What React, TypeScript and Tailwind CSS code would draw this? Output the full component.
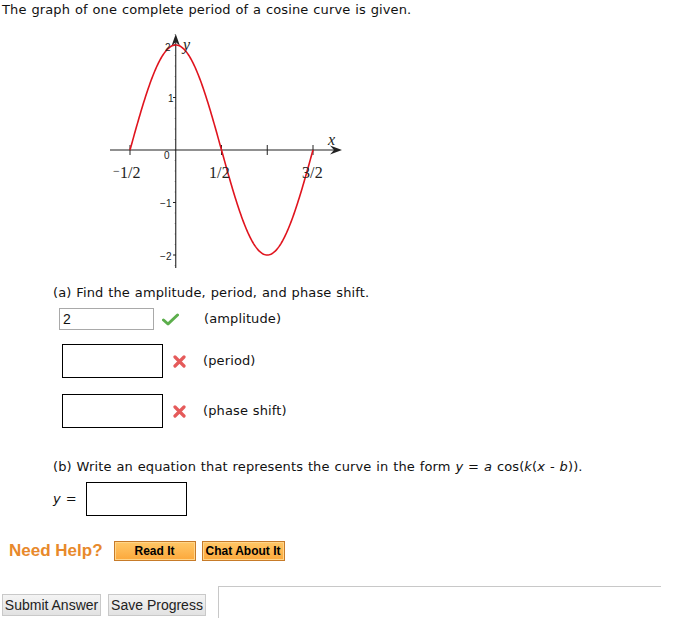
import React from "react";

// page coordinates mapped straight into the svg viewBox
const X0 = 175.75;
const UX = 91.5;
const Y0 = 150;
const UY = 52.5;

function curvePath() {
  const pts: string[] = [];
  for (let i = 0; i <= 200; i++) {
    const t = -0.5 + i * 0.01;
    const v = 2 * Math.cos(Math.PI * t);
    pts.push(`${i === 0 ? "M" : "L"}${(X0 + UX * t).toFixed(2)} ${(Y0 - UY * v).toFixed(2)}`);
  }
  return pts.join(" ");
}

function CosineGraph() {
  const minor: number[] = [];
  for (let v = -2.2; v <= 2.21; v += 0.2) minor.push(v);
  return (
    <svg width={250} height={240} viewBox="100 30 250 240" className="block">
      {/* y axis minor ticks */}
      {minor.map((v) => (
        <line key={v.toFixed(1)} x1={174.5} x2={176} y1={Y0 - UY * v} y2={Y0 - UY * v} stroke="#777" strokeWidth={0.5} />
      ))}
      {/* axes */}
      <line x1={110} y1={Y0} x2={336} y2={Y0} stroke="#222" strokeWidth={1.1} />
      <polygon points="342,150 330,145.5 334,150 330,154.5" fill="#222" />
      <line x1={X0} y1={268} x2={X0} y2={40} stroke="#222" strokeWidth={1.1} />
      <polygon points="175.75,34 171.5,46 175.75,42 180,46" fill="#222" />
      {/* x ticks */}
      {[-0.5, 0.5, 1, 1.5].map((t) => (
        <line key={t} x1={X0 + UX * t} x2={X0 + UX * t} y1={145} y2={155} stroke="#222" strokeWidth={1} />
      ))}
      {/* y ticks */}
      {[1, -1, -2, 2].map((v) => (
        <line key={v} x1={173} x2={176} y1={Y0 - UY * v} y2={Y0 - UY * v} stroke="#222" strokeWidth={1} />
      ))}
      <path d={curvePath()} fill="none" stroke="#e0141e" strokeWidth={1.6} />
      {/* labels */}
      <g fontFamily="Liberation Sans, Arial, sans-serif" fontSize={10} fill="#222">
        <text x={165} y={51}>2</text>
        <text x={168} y={102}>1</text>
        <text x={164} y={159}>0</text>
        <text x={160} y={207}>−1</text>
        <text x={160} y={260}>−2</text>
      </g>
      <g fontFamily="Liberation Serif, Times New Roman, serif" fontSize={16} fill="#222">
        <text x={113} y={178}>
          <tspan fontSize={12} dy={-3}>−</tspan>
          <tspan dy={3}>1/2</tspan>
        </text>
        <text x={209} y={178}>1/2</text>
        <text x={302} y={178}>3/2</text>
        <text x={183} y={50} fontStyle="italic">y</text>
        <text x={328} y={145} fontStyle="italic">x</text>
      </g>
    </svg>
  );
}

function CheckIcon() {
  return (
    <svg width={17} height={13} viewBox="0 0 17 13" className="block">
      <path d="M1.5 7 L6 11 L15.5 2" fill="none" stroke="#5cae4c" strokeWidth={3} strokeLinecap="round" strokeLinejoin="round" />
    </svg>
  );
}

function CrossIcon() {
  return (
    <svg width={13} height={13} viewBox="0 0 13 13" className="block">
      <path d="M2 2 L11 11 M11 2 L2 11" fill="none" stroke="#e55a5a" strokeWidth={3.2} strokeLinecap="round" />
    </svg>
  );
}

function AnswerRow({ label, mt }: { label: string; mt: string }) {
  return (
    <div className={`flex items-center ${mt}`}>
      <div className="ml-[9px] h-[34px] w-[101px] border border-black bg-white" />
      <div className="ml-[10px]">
        <CrossIcon />
      </div>
      <span className="ml-[17px]">{label}</span>
    </div>
  );
}

export default function App() {
  return (
    <div className="relative h-[618px] w-[674px] overflow-hidden bg-white text-[13px] leading-[16px] tracking-[0.12px] [word-spacing:0.6px] text-[#111] [font-family:'DejaVu_Sans',Verdana,sans-serif]">
      <p className="pl-[2px] pt-[2px]">The graph of one complete period of a cosine curve is given.</p>

      <div className="ml-[100px] mt-[12px]">
        <CosineGraph />
      </div>

      <div className="pl-[53px]">
        <p className="mt-[15px]">(a) Find the amplitude, period, and phase shift.</p>

        <div className="mt-[7px] flex items-center">
          <div className="ml-[6px] flex h-[22px] w-[95px] items-center border border-[#a9a9a9] bg-white pl-[3px] [font-family:'Liberation_Sans',Arial,sans-serif] text-[14px]">
            2
          </div>
          <div className="ml-[8px] mt-[1px]">
            <CheckIcon />
          </div>
          <span className="ml-[25px]">(amplitude)</span>
        </div>

        <AnswerRow label="(period)" mt="mt-[14px]" />
        <AnswerRow label="(phase shift)" mt="mt-[16px]" />

        <p className="mt-[31px]">
          (b) Write an equation that represents the curve in the form <i>y</i> = <i>a</i> cos(<i>k</i>(<i>x</i> - <i>b</i>)).
        </p>

        <div className="mt-[7px] flex items-center">
          <span>
            <i>y</i> =
          </span>
          <div className="ml-[9px] h-[34px] w-[101px] border border-black bg-white" />
        </div>
      </div>

      <div className="mt-[25px] flex items-center pl-[9px] tracking-normal [word-spacing:0] [font-family:'Liberation_Sans',Arial,sans-serif]">
        <span className="text-[17px] font-bold text-[#e8892b]">Need Help?</span>
        <button className="ml-[11px] h-[20px] w-[82px] border border-[#c77b29] bg-gradient-to-b from-[#ffc766] to-[#fca83a] text-[12px] font-bold text-black shadow-[inset_0_0_0_1px_#ffd58a]">
          Read It
        </button>
        <button className="ml-[6px] h-[20px] w-[83px] border border-[#c77b29] bg-gradient-to-b from-[#ffc766] to-[#fca83a] text-[12px] font-bold text-black shadow-[inset_0_0_0_1px_#ffd58a]">
          Chat About It
        </button>
      </div>

      <div className="mt-[25px] flex items-start tracking-normal [word-spacing:0] [font-family:'Liberation_Sans',Arial,sans-serif]">
        <button className="ml-[2px] mt-[8px] h-[22px] w-[99px] border border-[#c9c9c9] bg-gradient-to-b from-[#f4f4f4] to-[#e2e2e2] text-[14px] text-[#222]">
          Submit Answer
        </button>
        <button className="ml-[7px] mt-[8px] h-[22px] w-[98px] border border-[#c9c9c9] bg-gradient-to-b from-[#f4f4f4] to-[#e2e2e2] text-[14px] text-[#222]">
          Save Progress
        </button>
        <div className="ml-[12px] h-[60px] w-[443px] border-l border-t border-[#c8c8c8]" />
      </div>
    </div>
  );
}
